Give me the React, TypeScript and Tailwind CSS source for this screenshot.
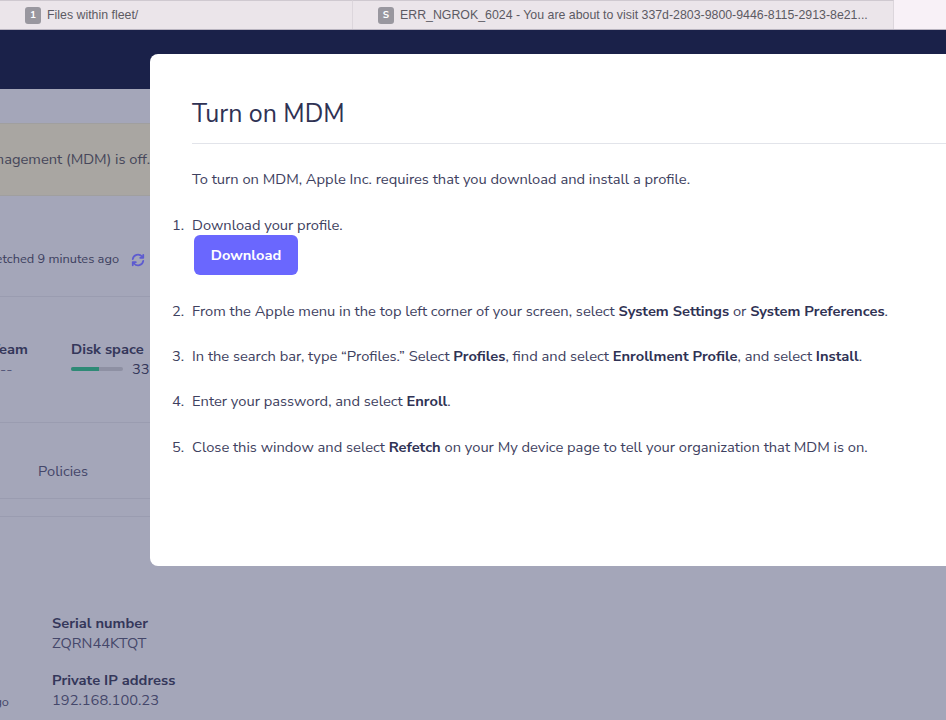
const font = { fontFamily: "'Nunito Sans', Lato, 'Noto Sans', sans-serif" };

function Tab({ badge, title, width }: { badge: string; title: string; width: string }) {
  return (
    <div className={`${width} h-full flex items-center pl-[25px] gap-[6px] border-r border-[#dcd6dc] bg-[#ebe5ea] border-t border-t-[#cfc9d0]`}>
      <span className="w-[16px] h-[17px] rounded-[3px] bg-[#99979f] text-white text-[10px] font-bold flex items-center justify-center">{badge}</span>
      <span className="text-[12.35px] text-[#5c5a63] whitespace-nowrap font-['Liberation_Sans',sans-serif]">{title}</span>
    </div>
  );
}

function Steps() {
  return (
    <ol className="mt-[26px] text-[14.7px] leading-[20px] text-[#3e4160]">
      <li className="flex h-[86px]">
        <span className="w-[42px] pl-[22px]">1.</span>
        <div>
          <p>Download your profile.</p>
          <button className="ml-[2px] w-[104px] h-[40px] rounded-[6px] bg-[#6a67fe] text-white font-bold text-[14.7px]">Download</button>
        </div>
      </li>
      <li className="flex h-[45px]">
        <span className="w-[42px] pl-[22px]">2.</span>
        <p>From the Apple menu in the top left corner of your screen, select <b className="text-[#2f3254]">System Settings</b> or <b className="text-[#2f3254]">System Preferences</b>.</p>
      </li>
      <li className="flex h-[45px]">
        <span className="w-[42px] pl-[22px]">3.</span>
        <p>In the search bar, type “Profiles.” Select <b className="text-[#2f3254]">Profiles</b>, find and select <b className="text-[#2f3254]">Enrollment Profile</b>, and select <b className="text-[#2f3254]">Install</b>.</p>
      </li>
      <li className="flex h-[46px]">
        <span className="w-[42px] pl-[22px]">4.</span>
        <p>Enter your password, and select <b className="text-[#2f3254]">Enroll</b>.</p>
      </li>
      <li className="flex">
        <span className="w-[42px] pl-[22px]">5.</span>
        <p>Close this window and select <b className="text-[#2f3254]">Refetch</b> on your My device page to tell your organization that MDM is on.</p>
      </li>
    </ol>
  );
}

export default function App() {
  return (
    <div style={font} className="relative w-[946px] h-[720px] overflow-hidden bg-[#a4a6b9] text-[#34375a]">
      <div className="h-[30px] flex bg-[#f8f1f7] border-b border-[#b9b4c0]">
        <Tab badge="1" title="Files within fleet/" width="w-[353px]" />
        <Tab badge="S" title="ERR_NGROK_6024 - You are about to visit 337d-2803-9800-9446-8115-2913-8e21..." width="w-[541px]" />
      </div>
      <div className="h-[59px] bg-[#1a2149]" />

      <div className="mt-[34px] h-[73px] flex items-center bg-[#a9a6a2] border-y border-[#a09f9f] text-[14.7px] text-[#46475a]">
        <div className="w-[150px] flex justify-end whitespace-nowrap overflow-hidden">
          <span>Mobile device management (MDM) is off.</span>
        </div>
      </div>

      <div className="h-[101px] flex items-center pt-[27px] border-b border-[#9a9cb0] text-[12.8px] text-[#3e4160]">
        <div className="w-[119px] flex justify-end whitespace-nowrap overflow-hidden">
          <span>Last fetched 9 minutes ago</span>
        </div>
        <svg className="ml-[12px] w-[14px] h-[14px]" viewBox="0 0 16 16" fill="none" stroke="#5d5bd0" strokeWidth="2" strokeLinecap="round" strokeLinejoin="round">
          <path d="M2 7a6 6 0 0 1 10.5-3L14 5.5M14 2v3.5h-3.5" />
          <path d="M14 9a6 6 0 0 1-10.5 3L2 10.5M2 14v-3.5h3.5" />
        </svg>
      </div>

      <div className="h-[126px] pt-[42px] border-b border-[#9a9cb0] text-[14.7px]">
        <div className="flex w-[150px] overflow-hidden whitespace-nowrap">
          <div className="w-[71px] shrink-0 -ml-[9px]">
            <p className="font-bold leading-[20px]">Team</p>
            <p className="leading-[20px] pl-[9px] text-[#55587a]">--</p>
          </div>
          <div className="ml-[9px] shrink-0">
            <p className="font-bold leading-[20px]">Disk space</p>
            <div className="flex items-center h-[20px]">
              <div className="w-[52px] h-[4px] rounded-full bg-[#8e90a3] overflow-hidden">
                <div className="w-[28px] h-full bg-[#2e8a76]" />
              </div>
              <span className="ml-[9px]">33 GB</span>
            </div>
          </div>
        </div>
      </div>

      <div className="h-[76px] flex items-center pl-[38px] pt-[22px] border-b border-[#9a9cb0] text-[14.7px] text-[#44476a]">
        Policies
      </div>
      <div className="h-[18px] border-b border-[#9a9cb0]" />

      <div className="pt-[96px] pl-[52px] text-[14.7px] leading-[20px]">
        <p className="font-bold">Serial number</p>
        <p className="text-[#44476a]">ZQRN44KTQT</p>
        <p className="mt-[17px] font-bold">Private IP address</p>
        <p className="text-[#44476a]">192.168.100.23</p>
      </div>
      <span className="absolute left-[-1px] top-[693px] text-[12.8px] text-[#44476a] w-[10px] overflow-hidden flex justify-end">go</span>

      <div className="absolute left-[150px] top-[54px] w-[860px] h-[512px] rounded-l-[8px] bg-white px-[42px]">
        <h1 className="h-[90px] pt-[43px] text-[25px] leading-[34px] text-[#2f3254] border-b border-[#e2e4ea]">Turn on MDM</h1>
        <p className="mt-[25px] text-[14.7px] leading-[20px] text-[#3e4160]">To turn on MDM, Apple Inc. requires that you download and install a profile.</p>
        <div className="-ml-[42px]">
          <Steps />
        </div>
      </div>
    </div>
  );
}
